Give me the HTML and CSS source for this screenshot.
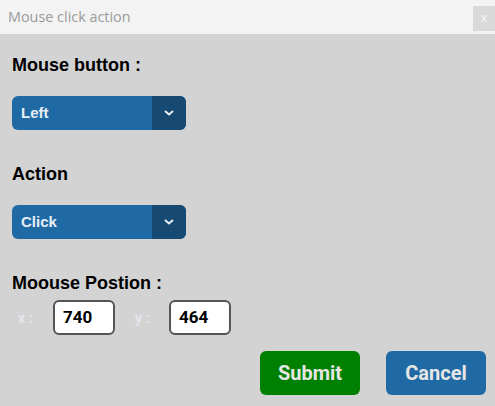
FILE: index.html
```html
<!DOCTYPE html>
<html>
<head>
<meta charset="utf-8">
<link rel="stylesheet" href="styles.css">
</head>
<body>
<div class="dialog">
  <div class="titlebar">
    <span class="title">Mouse click action</span>
    <span class="close">x</span>
  </div>
  <div class="content">
    <div class="label first">Mouse button :</div>
    <div class="select">
      <span class="select-text">Left</span>
      <span class="select-arrow"><svg width="10" height="6" viewBox="0 0 10 6"><path d="M1 1 L5 4.5 L9 1" fill="none" stroke="#e8eef5" stroke-width="2"/></svg></span>
    </div>
    <div class="label">Action</div>
    <div class="select">
      <span class="select-text">Click</span>
      <span class="select-arrow"><svg width="10" height="6" viewBox="0 0 10 6"><path d="M1 1 L5 4.5 L9 1" fill="none" stroke="#e8eef5" stroke-width="2"/></svg></span>
    </div>
    <div class="label">Moouse Postion :</div>
    <div class="pos-row">
      <span class="axis">x :</span>
      <span class="num">740</span>
      <span class="axis axis-y">y :</span>
      <span class="num">464</span>
    </div>
    <div class="buttons">
      <span class="btn submit">Submit</span>
      <span class="btn cancel">Cancel</span>
    </div>
  </div>
</div>
</body>
</html>
```
FILE: styles.css
```css
html, body {
  margin: 0;
  padding: 0;
  background: #d3d3d3;
}
.dialog {
  width: 495px;
  height: 406px;
  background: #d3d3d3;
  overflow: hidden;
}
.titlebar {
  height: 34px;
  background: #f3f3f3;
  display: flex;
  align-items: flex-start;
  justify-content: space-between;
}
.title {
  font-family: "Open Sans", sans-serif;
  font-size: 14.4px;
  color: #9a9a9a;
  padding-left: 8px;
  line-height: 34px;
}
.close {
  margin-top: 6px;
  width: 22px;
  height: 25px;
  background: #d9d9d9;
  color: #f3f3f3;
  font-family: "DejaVu Sans", sans-serif;
  font-size: 12px;
  line-height: 24px;
  text-align: center;
}
.content {
  padding: 0 12px;
}
.label {
  font-family: "Liberation Sans", Arial, sans-serif;
  font-weight: bold;
  font-size: 18px;
  line-height: 20px;
  color: #000;
  margin-top: 34px;
}
.label.first {
  margin-top: 21px;
}
.select {
  margin-top: 21px;
  width: 174px;
  height: 34px;
  border-radius: 6px;
  background: #1f6aa5;
  display: flex;
  overflow: hidden;
}
.select-text {
  flex: 1;
  font-family: "Liberation Sans", Arial, sans-serif;
  font-weight: bold;
  font-size: 15px;
  color: #e8eef5;
  line-height: 34px;
  padding-left: 9px;
}
.select-arrow {
  width: 34px;
  background: #174a72;
  display: flex;
  align-items: center;
  justify-content: center;
}
.select-arrow svg {
  display: block;
}
.pos-row {
  margin-top: 7px;
  display: flex;
  align-items: center;
  padding-left: 6px;
}
.axis {
  width: 35px;
  font-family: Roboto, sans-serif;
  font-weight: bold;
  font-size: 14px;
  color: #e2e6ec;
}
.axis-y {
  margin-left: 20px;
  width: 34px;
}
.num {
  box-sizing: border-box;
  width: 62px;
  height: 35px;
  border: 2px solid #555;
  border-radius: 6px;
  background: #fff;
  font-family: Roboto, sans-serif;
  font-weight: bold;
  font-size: 17px;
  color: #000;
  line-height: 31px;
  padding-left: 8px;
}
.buttons {
  margin-top: 16px;
  margin-right: -3px;
  display: flex;
  justify-content: flex-end;
  gap: 26px;
}
.btn {
  width: 100px;
  height: 44px;
  border-radius: 6px;
  font-family: Roboto, sans-serif;
  font-weight: bold;
  font-size: 20px;
  color: #e6e6e6;
  text-align: center;
  line-height: 44px;
}
.submit {
  background: #008000;
}
.cancel {
  background: #1f6aa5;
}
```
